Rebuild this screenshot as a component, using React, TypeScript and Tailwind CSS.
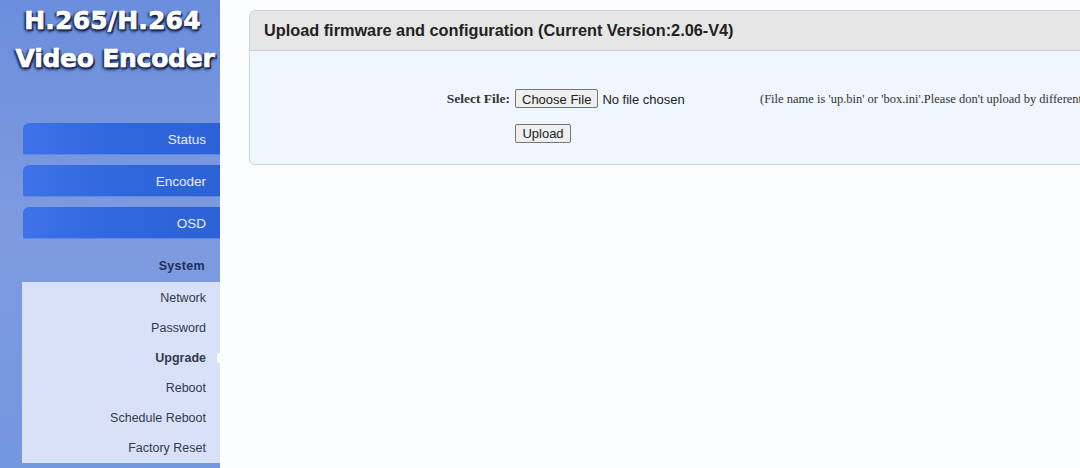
import React from 'react';

const topItems = ['Status', 'Encoder', 'OSD'];
const systemItems = ['Network', 'Password', 'Upgrade', 'Reboot', 'Schedule Reboot', 'Factory Reset'];

const Sidebar: React.FC = () => (
  <aside className="w-[220px] h-[468px] shrink-0 overflow-hidden bg-gradient-to-b from-[#6b8edc] via-[#7e9bdf] to-[#7397e0] font-['Liberation_Sans',sans-serif]">
    <div className="h-[123px] pt-[2px] pl-[10px] text-center font-['DejaVu_Sans',sans-serif] font-bold text-[25px] leading-[38px] tracking-[-0.25px] text-white [-webkit-text-stroke:0.7px_white] [text-shadow:2px_2px_1px_#1c2a55,-2px_1px_2px_#1c2a55,0_3px_3px_#2a3c70]">
      <div className="pr-[5px] tracking-[0.2px]">H.265/H.264</div>
      <div>Video Encoder</div>
    </div>

    <nav className="ml-[23px] flex flex-col gap-[10px]">
      {topItems.map(item => (
        <div
          key={item}
          className="h-[32px] pt-[3px] pr-[14px] flex items-center justify-end rounded-tl-[6px] rounded-bl-[2px] bg-gradient-to-r from-[#3f72e8] via-[#2f66db] to-[#2c62d6] border-b border-[#5f88e4] text-[13.5px] text-[#e6eefc]"
        >
          {item}
        </div>
      ))}
    </nav>

    <div className="mt-[14px] mb-[3px] h-[26px] pr-[15px] flex items-center justify-end text-[12.5px] font-bold tracking-[0.3px] text-[#1f2f5e]">
      System
    </div>

    <ul className="ml-[22px] h-[181px] pt-[1px] flex flex-col bg-[#d8e1f8] text-[12.5px] text-[#333a4d]">
      {systemItems.map(item => (
        <li
          key={item}
          className={`relative h-[30.1px] shrink-0 pr-[14px] flex items-center justify-end ${item === 'Upgrade' ? 'font-bold' : ''}`}
        >
          {item}
          {item === 'Upgrade' && (
            <span className="absolute right-0 top-[10px] w-[3px] h-[10px] rounded-l-full bg-white" />
          )}
        </li>
      ))}
    </ul>
  </aside>
);

export default function App() {
  return (
    <div className="w-[1080px] h-[468px] flex overflow-hidden bg-[#fcfdff]">
      <Sidebar />
      <main className="flex-1 min-w-0 pl-[29px] pt-[10px] overflow-hidden">
        <section className="w-[900px] h-[155px] rounded-[6px] border border-[#cfd3d8] overflow-hidden bg-[#eff6fe]">
          <h2 className="h-[40px] pl-[14px] flex items-center border-b border-[#c9ced4] bg-[#e6e6e6] font-['Liberation_Sans',sans-serif] font-bold text-[16.3px] text-[#222]">
            Upload firmware and configuration (Current Version:2.06-V4)
          </h2>
          <div className="pt-[39px] flex flex-col gap-[15px]">
            <div className="flex items-center h-[19px]">
              <label className="w-[265px] pr-[5px] text-right font-['Liberation_Serif',serif] font-bold text-[13.5px] text-[#333]">
                Select File:
              </label>
              <input
                type="file"
                className="w-[245px] shrink-0 font-['Liberation_Sans',sans-serif] text-[13px] text-[#222] file:h-[19px] file:px-[6px] file:mr-[4px] file:rounded-[2px] file:border file:border-[#767676] file:bg-[#efefef] file:text-[#222]"
              />
              <span className="whitespace-nowrap font-['Liberation_Serif',serif] text-[12.5px] text-[#333]">
                (File name is 'up.bin' or 'box.ini'.Please don't upload by different
              </span>
            </div>
            <div className="pl-[265px] flex">
              <button className="h-[19px] w-[56px] rounded-[2px] border border-[#767676] bg-[#efefef] font-['Liberation_Sans',sans-serif] text-[13px] leading-none text-[#222]">
                Upload
              </button>
            </div>
          </div>
        </section>
      </main>
    </div>
  );
}
